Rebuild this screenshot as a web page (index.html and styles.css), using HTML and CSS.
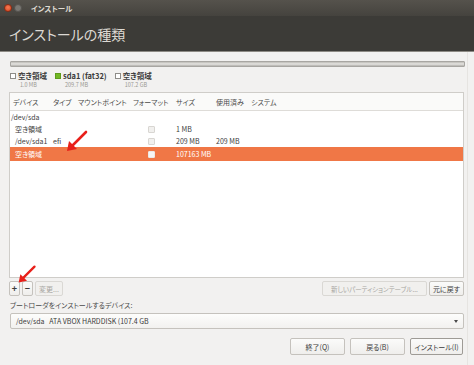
FILE: index.html
```html
<!DOCTYPE html>
<html lang="ja">
<head>
<meta charset="utf-8">
<link rel="stylesheet" href="styles.css">
</head>
<body>
<div class="window">
  <div class="titlebar">
    <span class="wbtn close"></span>
    <span class="wbtn min"></span>
    <span class="wtitle">インストール</span>
  </div>
  <div class="header">インストールの種類</div>
  <div class="main">
    <div class="pbar"></div>
    <div class="legend">
      <div class="litem"><span class="sq"></span><div><div class="lname">空き領域</div><div class="lsize">1.0 MB</div></div></div>
      <div class="litem"><span class="sq green"></span><div><div class="lname">sda1 (fat32)</div><div class="lsize">209.7 MB</div></div></div>
      <div class="litem"><span class="sq"></span><div><div class="lname">空き領域</div><div class="lsize">107.2 GB</div></div></div>
    </div>
    <div class="table">
      <div class="thead">
        <span class="c1">デバイス</span><span class="c2">タイプ</span><span class="c3">マウントポイント</span><span class="c4">フォーマット</span><span class="c5">サイズ</span><span class="c6">使用済み</span><span class="c7">システム</span>
      </div>
      <div class="row"><span class="c1 dev">/dev/sda</span></div>
      <div class="row"><span class="c1 ind">空き領域</span><span class="c2"></span><span class="c3"></span><span class="c4"><i class="cb"></i></span><span class="c5">1 MB</span></div>
      <div class="row"><span class="c1 ind">/dev/sda1</span><span class="c2">efi</span><span class="c3"></span><span class="c4"><i class="cb"></i></span><span class="c5">209 MB</span><span class="c6">209 MB</span></div>
      <div class="row sel"><span class="c1 ind">空き領域</span><span class="c2"></span><span class="c3"></span><span class="c4"><i class="cb"></i></span><span class="c5">107163 MB</span></div>
      <svg class="arrow a1" width="24" height="24" viewBox="0 0 24 24"><path d="M21 2 L6 17" stroke="#e8201a" stroke-width="2.6" stroke-linecap="round" fill="none"/><path d="M2 21 L4 11 L12 19 Z" fill="#e8201a"/></svg>
    </div>
    <div class="tools">
      <div class="tl">
        <span class="btn sm">+</span><span class="btn sm">−</span><span class="btn dis">変更...</span>
        <svg class="arrow a2" width="20" height="20" viewBox="0 0 24 24"><path d="M21 2 L6 17" stroke="#e8201a" stroke-width="2.8" stroke-linecap="round" fill="none"/><path d="M2 21 L4 11 L12 19 Z" fill="#e8201a"/></svg>
      </div>
      <div class="tr">
        <span class="btn dis wide">新しいパーティションテーブル...</span><span class="btn">元に戻す</span>
      </div>
    </div>
    <div class="blabel">ブートローダをインストールするデバイス:</div>
    <div class="combo"><span>/dev/sda&nbsp;&nbsp;&nbsp;ATA VBOX HARDDISK (107.4 GB</span><i class="caret"></i></div>
    <div class="actions">
      <span class="btn act">終了(Q)</span><span class="btn act">戻る(B)</span><span class="btn act def">インストール(I)</span>
    </div>
  </div>
</div>
</body>
</html>
```
FILE: styles.css
```css
* { box-sizing: border-box; }
html, body { margin: 0; padding: 0; }
body {
  width: 474px; height: 365px; overflow: hidden;
  background: #f2f1f0;
  font-family: "Noto Sans CJK JP", "Noto Sans", sans-serif;
  font-feature-settings: "palt";
  color: #3c3c3c;
  white-space: nowrap;
}
.window { width: 474px; height: 365px; display: flex; flex-direction: column; }
.titlebar {
  height: 16px; background: linear-gradient(#55524c, #45433e);
  display: flex; align-items: center; padding-left: 4px; gap: 1px; flex-shrink: 0;
}
.wbtn { width: 8px; height: 8px; border-radius: 50%; display: inline-block; }
.close { background: radial-gradient(circle at 50% 40%, #f47b55, #d9451f); border: 1px solid #8a2c14; }
.min { background: #7a7873; border: 1px solid #55534f; margin-left: 1px; }
.wtitle { color: #dfdbd2; font-size: 7.5px; font-weight: bold; margin-left: 8px; }
.header {
  height: 36px; background: #3c3b37; color: #dcd9d3; flex-shrink: 0;
  font-size: 14px; padding-left: 9px; display: flex; align-items: center;
  border-bottom: 1px solid #8d8a84;
}
.main { flex: 1; padding: 9px 2px 0 9px; position: relative; border-right: 1px solid #e6e4e1; margin-right: 6px; }
.pbar {
  height: 6px; margin: 0 0 0 1px;
  background: linear-gradient(#bdbbb6, #e6e5e2 50%, #b2b0ab);
  border: 1px solid #a8a6a2; border-radius: 1px;
}
.legend { display: flex; gap: 8px; margin-top: 4px; padding-left: 1px; height: 19px; }
.litem { display: flex; align-items: flex-start; gap: 2px; }
.sq { width: 6px; height: 6px; border: 1px solid #8e8c88; background: #fff; margin-top: 2px; }
.sq.green { background: #73b825; border-color: #5e9b1c; }
.lname { font-size: 7.5px; font-weight: bold; line-height: 10px; color: #3c3c3c; }
.lsize { font-size: 5.5px; color: #9a9893; line-height: 8px; padding-left: 2px; }
.table {
  position: relative; height: 186px; background: #fff;
  border: 1px solid #cfcdc9; margin-top: 2px; margin-right: 1px;
}
.thead {
  height: 18px; display: flex; align-items: center; font-size: 7px;
  border-bottom: 1px solid #dedcd8; background: #fafaf9; color: #4a4a4a;
}
.thead span, .row span { flex-shrink: 0; }
.c1 { width: 43px; padding-left: 3px; }
.c2 { width: 25px; }
.c3 { width: 55px; }
.c4 { width: 43px; }
.c5 { width: 40px; }
.c6 { width: 35px; }
.c7 { flex: 1; }
.row { height: 12px; display: flex; align-items: center; font-size: 7px; color: #3c3c3c; }
.row .c1.dev { width: auto; padding-left: 1px; }
.row .ind { padding-left: 5px; }
.row .c4 { padding-left: 15px; display: flex; align-items: center; }
.cb { display: inline-block; width: 7px; height: 7px; border: 1px solid #d8d6d2; background: #f1f0ee; border-radius: 1px; }
.row.sel { background: #f07746; color: #fff; height: 14px; }
.row.sel .cb { background: #f7f6f4; border-color: #ece9e6; }
.arrow { position: absolute; }
.a1 { left: 55px; top: 37px; }
.tools { display: flex; justify-content: space-between; margin-top: 3px; height: 15px; padding-right: 1px; }
.tl, .tr { display: flex; gap: 2px; position: relative; }
.btn {
  display: inline-flex; align-items: center; justify-content: center;
  height: 15px; padding: 0 3px; font-size: 7px; color: #3c3c3c;
  border: 1px solid #c5c2bd; border-radius: 2px;
  background: linear-gradient(#fbfbfa, #efeeec);
}
.btn.sm { width: 11px; padding: 0; font-size: 9px; font-weight: bold; }
.btn.dis { color: #a8a6a2; border-color: #dad8d4; background: #f1f0ee; }
.btn.dis.wide { width: 105px; font-size: 6.5px; }
.a2 { left: 8px; top: -16px; }
.blabel { font-size: 7px; margin-top: 4px; color: #4a4a4a; height: 11px; line-height: 11px; padding-left: 1px; }
.combo {
  margin-top: 2px; height: 16px; display: flex; align-items: center; justify-content: space-between;
  border: 1px solid #c5c2bd; border-radius: 2px; background: linear-gradient(#fdfdfc, #f2f1ef);
  font-size: 7px; padding: 0 5px 0 5px; color: #3c3c3c; margin-left: 1px; margin-right: 1px;
}
.caret { width: 0; height: 0; border-left: 2.5px solid transparent; border-right: 2.5px solid transparent; border-top: 3px solid #4a4a4a; }
.actions { display: flex; justify-content: flex-end; gap: 5px; margin-top: 9px; padding-right: 2px; }
.btn.act { width: 55px; height: 17px; }
.btn.act.def { width: 53px; padding: 0 1px; border-color: #9e9b96; }
```
